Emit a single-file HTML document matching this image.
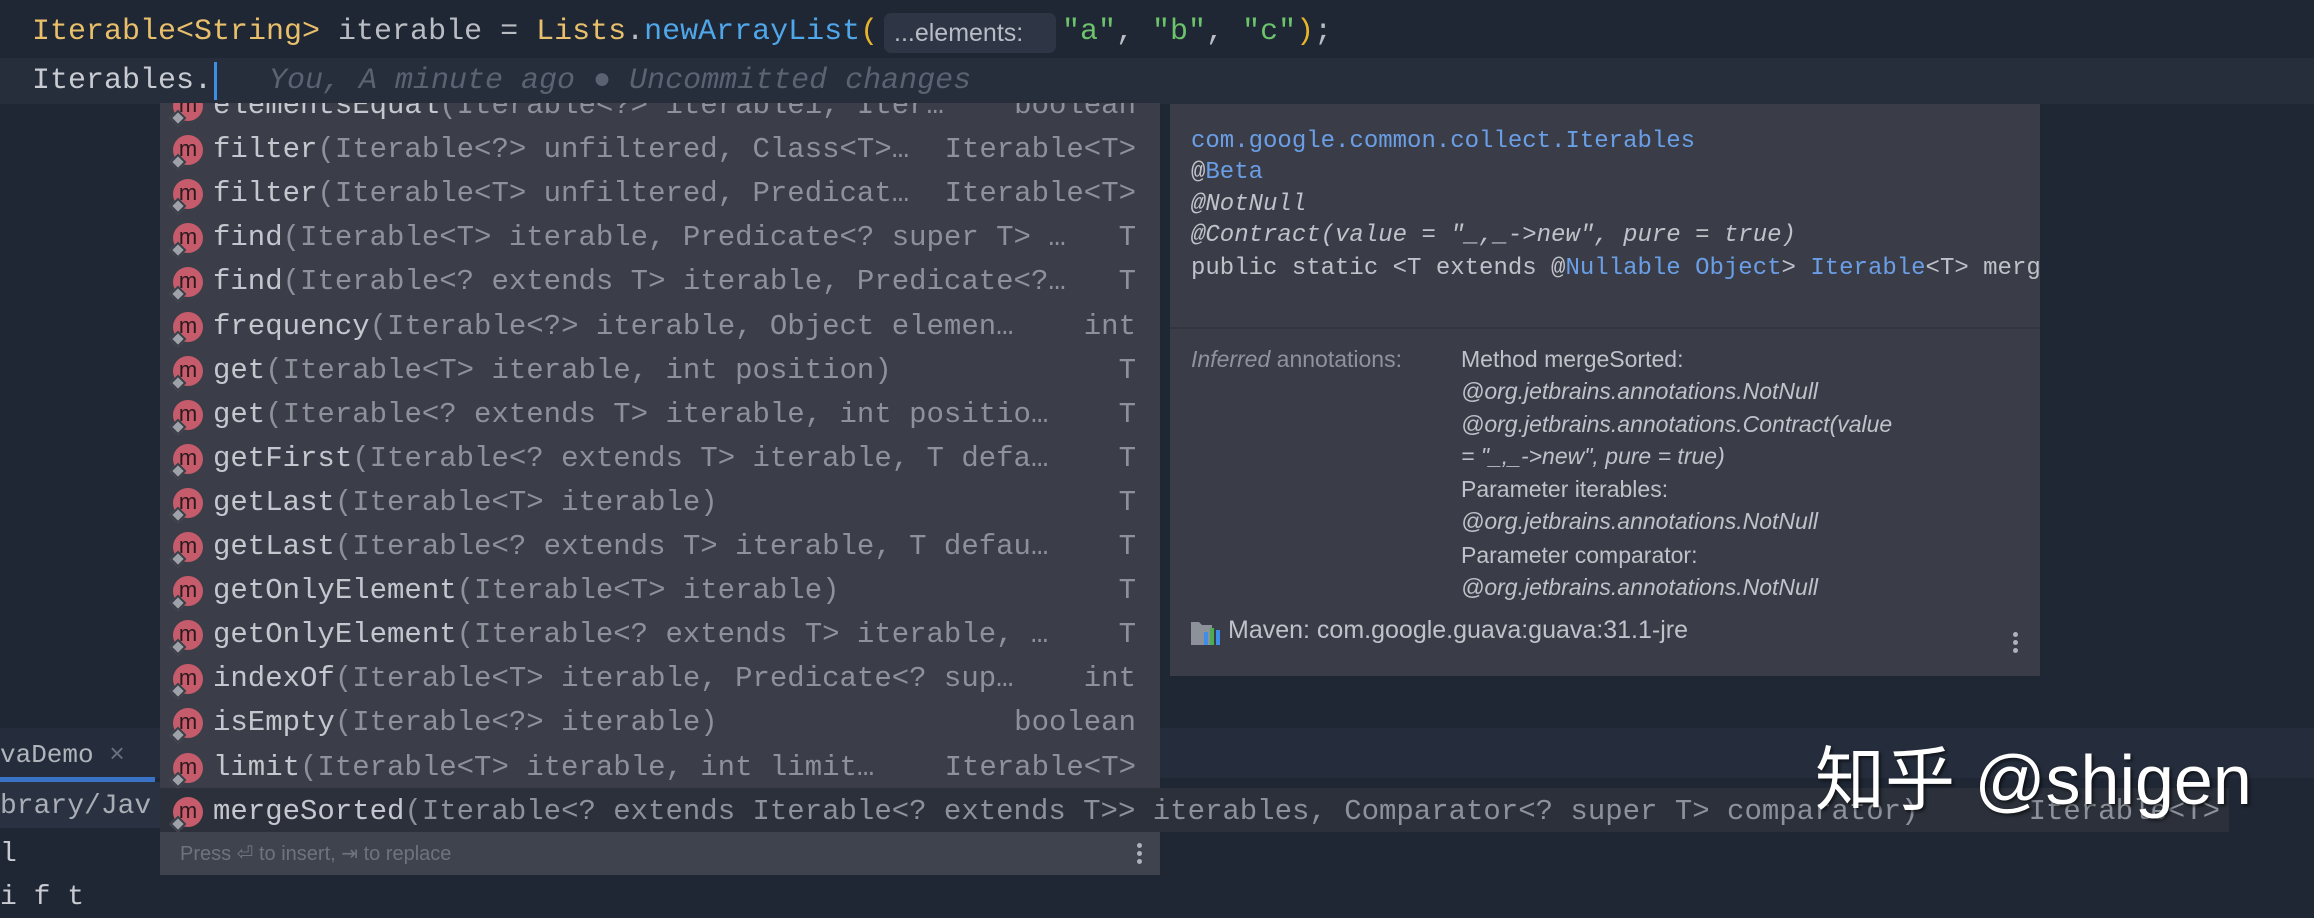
<!DOCTYPE html>
<html><head><meta charset="utf-8"><style>
*{margin:0;padding:0;box-sizing:border-box}
body{width:2314px;height:894px;overflow:hidden;background:#1f2634;position:relative;font-family:"Liberation Mono",monospace}
.a{position:absolute;white-space:pre}
.mono{font-family:"Liberation Mono",monospace}
.sans{font-family:"Liberation Sans",sans-serif}
.ic{position:absolute;left:173px;width:30px;height:30px;border-radius:50%;background:#c65b6b;color:#2a1a1e;font:22px/28px "Liberation Sans",sans-serif;text-align:center}
.ic:after{content:"";position:absolute;left:-1px;bottom:-3px;width:8px;height:8px;background:#9ea2a8;transform:rotate(45deg);border:2px solid #3a3e48}
.rt{font-size:29px;line-height:44px;color:#c4c7cd}
.rt .p{color:#8d9199}
.d{position:absolute;font-size:24px;color:#bfc2c8;white-space:pre;line-height:32px}
.b{color:#6a9ee6}
.s{position:absolute;left:1461px;font:23px/32px "Liberation Sans",sans-serif;color:#bfc2c8;white-space:pre}
.si{font-style:italic}
</style></head><body>
<div class="a" style="left:0;top:58px;width:2314px;height:46px;background:#262d3b"></div>
<div class="a mono" style="left:32px;top:12px;font-size:30px;line-height:40px;color:#b9bcc2"><span style="color:#e8bf6a">Iterable&lt;String&gt;</span> iterable = <span style="color:#e8bf6a">Lists</span>.<span style="color:#4fa6e8">newArrayList</span><span style="color:#e8b52a">(</span></div>
<div class="a sans" style="left:884px;top:13px;width:172px;height:40px;background:#2e3645;border-radius:7px;color:#b8bcc4;font-size:25px;line-height:40px;padding-left:10px">...elements:</div>
<div class="a mono" style="left:1062px;top:12px;font-size:30px;line-height:40px;color:#b9bcc2"><span style="color:#6cc36c">"a"</span>, <span style="color:#6cc36c">"b"</span>, <span style="color:#6cc36c">"c"</span><span style="color:#e8b52a">)</span>;</div>
<div class="a mono" style="left:32px;top:61px;font-size:30px;line-height:40px;color:#c8cbd1">Iterables.</div>
<div class="a" style="left:214px;top:62px;width:3px;height:38px;background:#3d8ee8"></div>
<div class="a mono" style="left:269px;top:61px;font-size:30px;line-height:40px;color:#5b6272;font-style:italic">You, A minute ago ● Uncommitted changes</div>
<div class="a" style="left:0;top:728px;width:2314px;height:50px;background:#252d3c"></div>
<div class="a" style="left:0;top:777px;width:155px;height:5px;background:#3a72c8"></div>
<div class="a" style="left:0;top:782px;width:160px;height:46px;background:#2a3241"></div>
<div class="a mono" style="left:0;top:738px;font-size:26px;line-height:34px;color:#b0b4bb">vaDemo <span style="color:#6a707c">×</span></div>
<div class="a mono" style="left:0;top:787px;font-size:28px;line-height:40px;color:#a9adb5">brary/Jav</div>
<div class="a mono" style="left:0;top:835px;font-size:28px;line-height:40px;color:#c8cbd1">l</div>
<div class="a mono" style="left:0;top:878px;font-size:28px;line-height:40px;color:#c8cbd1">i f t</div>
<div class="a" style="left:160px;top:103px;width:1000px;height:772px;background:#3b3e48;overflow:hidden"></div>
<div class="a" style="left:160px;top:788px;width:2069px;height:44px;background:#2b303a"></div>
<div class="a" style="left:160px;top:832px;width:1000px;height:43px;background:#3f434d"></div>
<div id="rows"></div>
<div class="a sans" style="left:180px;top:840px;font-size:20px;line-height:28px;color:#6e737c">Press ⏎ to insert, ⇥ to replace</div>
<div class="a" style="left:1137px;top:843px;width:5px;height:5px;border-radius:50%;background:#aeb2b8;box-shadow:0 8px 0 #aeb2b8,0 16px 0 #aeb2b8"></div>
<div class="a" style="left:1170px;top:104px;width:870px;height:572px;background:#3a3d47"></div>
<div class="a" style="left:1170px;top:327px;width:870px;height:2px;background:#33363f"></div>
<div class="a" style="left:1170px;top:104px;width:870px;height:240px;overflow:hidden">
<div class="d" style="left:21px;top:22px"><span class="b">com.google.common.collect.Iterables</span></div>
<div class="d" style="left:21px;top:53px">@<span class="b">Beta</span></div>
<div class="d" style="left:21px;top:85px;font-style:italic">@NotNull</div>
<div class="d" style="left:21px;top:116px;font-style:italic">@Contract(value = "_,_-&gt;new", pure = true)</div>
<div class="d" style="left:21px;top:149px">public static &lt;T extends @<span class="b">Nullable Object</span>&gt; <span class="b">Iterable</span>&lt;T&gt; mergeSorted(</div>
</div>
<div class="a sans" style="left:1191px;top:343px;font-size:23px;line-height:32px;color:#8f939b"><i>Inferred</i> annotations:</div>
<div class="s" style="top:343px">Method mergeSorted:</div>
<div class="s si" style="top:375px">@org.jetbrains.annotations.NotNull</div>
<div class="s si" style="top:408px">@org.jetbrains.annotations.Contract(value</div>
<div class="s si" style="top:440px">= "_,_-&gt;new", pure = true)</div>
<div class="s" style="top:473px">Parameter iterables:</div>
<div class="s si" style="top:505px">@org.jetbrains.annotations.NotNull</div>
<div class="s" style="top:539px">Parameter comparator:</div>
<div class="s si" style="top:571px">@org.jetbrains.annotations.NotNull</div>
<svg class="a" style="left:1191px;top:618px" width="32" height="28" viewBox="0 0 32 28"><path d="M0 4h8l3 3h10v20H0z" fill="#8d929a"/><rect x="13" y="14" width="4" height="13" fill="#3d8ee8"/><rect x="19" y="10" width="4" height="17" fill="#4cae50"/><rect x="25" y="12" width="4" height="15" fill="#3d8ee8"/></svg>
<div class="a sans" style="left:1228px;top:614px;font-size:25px;line-height:32px;color:#bfc2c8">Maven: com.google.guava:guava:31.1-jre</div>
<div class="a" style="left:2013px;top:632px;width:5px;height:5px;border-radius:50%;background:#aeb2b8;box-shadow:0 8px 0 #aeb2b8,0 16px 0 #aeb2b8"></div>
<div class="a" style="left:1815px;top:738px;font-family:'Liberation Sans','Noto Sans CJK SC',sans-serif;font-size:70px;line-height:84px;color:#fff;text-shadow:2px 2px 3px rgba(0,0,0,.6)">知乎 @shigen</div>
<script>
var R=[
["elementsEqual","(Iterable<?> iterable1, Iter…","boolean"],
["filter","(Iterable<?> unfiltered, Class<T>…","Iterable<T>"],
["filter","(Iterable<T> unfiltered, Predicat…","Iterable<T>"],
["find","(Iterable<T> iterable, Predicate<? super T> …","T"],
["find","(Iterable<? extends T> iterable, Predicate<?…","T"],
["frequency","(Iterable<?> iterable, Object elemen…","int"],
["get","(Iterable<T> iterable, int position)","T"],
["get","(Iterable<? extends T> iterable, int positio…","T"],
["getFirst","(Iterable<? extends T> iterable, T defa…","T"],
["getLast","(Iterable<T> iterable)","T"],
["getLast","(Iterable<? extends T> iterable, T defau…","T"],
["getOnlyElement","(Iterable<T> iterable)","T"],
["getOnlyElement","(Iterable<? extends T> iterable, …","T"],
["indexOf","(Iterable<T> iterable, Predicate<? sup…","int"],
["isEmpty","(Iterable<?> iterable)","boolean"],
["limit","(Iterable<T> iterable, int limit…","Iterable<T>"],
["mergeSorted","(Iterable<? extends Iterable<? extends T>> iterables, Comparator<? super T> comparator)","Iterable<T>"]];
function e(s){return s.replace(/&/g,"&amp;").replace(/</g,"&lt;").replace(/>/g,"&gt;")}
var h="";
R.forEach(function(r,i){var c=106+44.1*i;var t=c-22;var clip=i==0?"clip-path:inset(19px 0 0 0);":"";
var rr=i==16?2220:1136;
h+='<div class="a" style="left:0;top:'+t+'px;width:2314px;height:44px;'+clip+'">'+
'<div class="ic" style="top:7px">m</div>'+
'<div class="a rt" style="left:213px;top:0">'+e(r[0])+'<span class="p">'+e(r[1])+'</span></div>'+
'<div class="a" style="left:'+(rr-250)+'px;width:250px;text-align:right;top:0;font-size:29px;line-height:44px;color:#8d9199">'+e(r[2])+'</div></div>';});
document.getElementById("rows").innerHTML=h;
</script>
</body></html>
